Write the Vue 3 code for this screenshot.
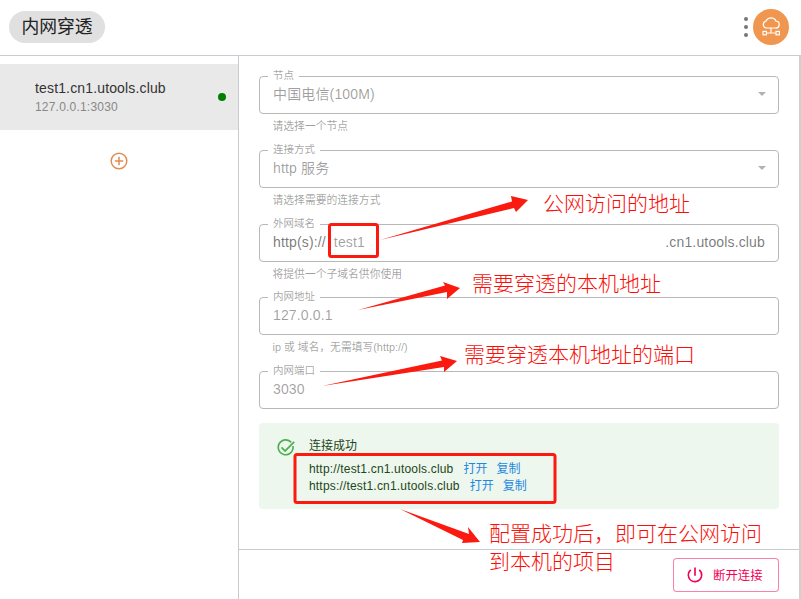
<script setup>
const fields = [
  { label: '节点', value: '中国电信(100M)', hint: '请选择一个节点', select: true },
  { label: '连接方式', value: 'http 服务', hint: '请选择需要的连接方式', select: true },
  { label: '外网域名', prefix: 'http(s)://', value: 'test1', suffix: '.cn1.utools.club', hint: '将提供一个子域名供你使用' },
  { label: '内网地址', value: '127.0.0.1', hint: 'ip 或 域名，无需填写(http://)' },
  { label: '内网端口', value: '3030', hint: '' },
]
const urls = ['http://test1.cn1.utools.club', 'https://test1.cn1.utools.club']
const arrows = [
  '380,240 512,201.5 511,196 528,200 516,212 514,208',
  '358,310 445,285.5 443,282 460,288 447,299 447,292',
  '322,386 442,360.5 440,356 457,361 444,372 444,367',
  '400,509 469,534 468,527 480,542 462,543 463,540',
]
const notes = [
  { cls: 'n1', text: '公网访问的地址' },
  { cls: 'n2', text: '需要穿透的本机地址' },
  { cls: 'n3', text: '需要穿透本机地址的端口' },
  { cls: 'n4', text: '配置成功后，即可在公网访问' },
  { cls: 'n5', text: '到本机的项目' },
]
</script>

<template>
  <div class="app">
    <header class="top">
      <span class="chip">内网穿透</span>
      <div class="top-right">
        <div class="dots"><i></i><i></i><i></i></div>
        <div class="avatar">
          <svg width="26" height="26" viewBox="0 0 26 26" fill="none" stroke="#fff" stroke-width="1.2">
            <path d="M8.500 14h9a3.400 3.400 0 0 0 .6-6.800A5.500 5.500 0 0 0 8 7.100a3.500 3.500 0 0 0 .5 6.900z" />
            <path d="M13 14v5M8.500 19h9" />
            <rect x="5" y="17.400" width="3.400" height="3.400" />
            <rect x="18" y="17.400" width="3.400" height="3.400" />
          </svg>
        </div>
      </div>
    </header>
    <div class="body">
      <aside class="side">
        <div class="item">
          <div class="item-text">
            <div class="host">test1.cn1.utools.club</div>
            <div class="addr">127.0.0.1:3030</div>
          </div>
          <span class="dot"></span>
        </div>
        <div class="add">
          <svg width="18" height="18" viewBox="0 0 18 18" fill="none" stroke="#e08d52" stroke-width="1.500">
            <circle cx="9" cy="9" r="7.800" />
            <path d="M9 4.800v8.400M4.800 9h8.400" />
          </svg>
        </div>
      </aside>
      <main class="main">
        <div class="form">
          <div v-for="f in fields" :key="f.label" class="row">
            <div class="field">
              <span class="label">{{ f.label }}</span>
              <span v-if="f.prefix" class="prefix">{{ f.prefix }}</span>
              <span class="value">{{ f.value }}</span>
              <span v-if="f.suffix" class="suffix">{{ f.suffix }}</span>
              <span v-if="f.select" class="caret"></span>
            </div>
            <div class="hint">{{ f.hint }}</div>
          </div>
          <div class="alert">
            <svg class="check" width="22" height="22" viewBox="0 0 24 24" fill="#4caf50">
              <path d="M20.500 9.800a9 9 0 1 1-2.200-4.600l-1.300 1.300a7.200 7.200 0 1 0 1.700 3.300z" />
              <path d="M7.800 10.700l3.200 3.200 9.300-9.300 1.300 1.300L11 16.500l-4.500-4.500z" />
            </svg>
            <div class="alert-body">
              <div class="alert-title">连接成功</div>
              <div v-for="u in urls" :key="u" class="url">
                <span>{{ u }}</span>
                <a>打开</a>
                <a>复制</a>
              </div>
            </div>
          </div>
        </div>
        <footer class="foot">
          <button class="stop">
            <svg width="20" height="20" viewBox="0 0 24 24" fill="#f50057">
              <path d="M13 3h-2v10h2V3zm4.830 2.170l-1.420 1.420A6.920 6.920 0 0 1 19 12c0 3.870-3.130 7-7 7A6.995 6.995 0 0 1 7.580 6.580L6.170 5.170A8.932 8.932 0 0 0 3 12a9 9 0 0 0 18 0c0-2.740-1.230-5.180-3.170-6.830z" />
            </svg>
            <span>断开连接</span>
          </button>
        </footer>
      </main>
    </div>

    <svg class="marks" width="801" height="599" viewBox="0 0 801 599">
      <rect x="329.500" y="224.500" width="48" height="32" rx="2" fill="none" stroke="#fb1a10" stroke-width="3" />
      <rect x="295" y="454.500" width="260" height="48" rx="2" fill="none" stroke="#fb1a10" stroke-width="3" />
      <polygon v-for="p in arrows" :key="p" :points="p" fill="#fb1a10" />
    </svg>
    <span v-for="n in notes" :key="n.cls" class="note" :class="n.cls">{{ n.text }}</span>
  </div>
</template>

<style>
html, body { margin: 0; background: #fff; }
</style>

<style scoped>
.app {
  position: relative;
  width: 801px;
  height: 599px;
  overflow: hidden;
  box-sizing: border-box;
  font-family: "Liberation Sans", "Noto Sans CJK SC", sans-serif;
  color: rgba(0, 0, 0, 0.87);
}
.top {
  height: 55px;
  border-bottom: 1px solid #c8ccd0;
  display: flex;
  align-items: center;
  justify-content: space-between;
  padding: 0 12px 0 9px;
}
.chip {
  height: 32px;
  line-height: 32px;
  margin-top: -1px;
  padding: 0 12.500px;
  border-radius: 16px;
  background: #e0e0e0;
  font-size: 17.800px;
  color: #222;
}
.top-right { display: flex; align-items: center; gap: 5.500px; margin-top: -1px; }
.dots { display: flex; flex-direction: column; gap: 4px; }
.dots i { width: 4px; height: 4px; border-radius: 50%; background: #777; display: block; }
.avatar {
  width: 36px;
  height: 36px;
  border-radius: 50%;
  background: #f0964f;
  display: flex;
  align-items: center;
  justify-content: center;
}
.body { display: flex; height: 543px; }
.side {
  width: 238px;
  flex: none;
  border-right: 1px solid #c8ccd0;
  padding-top: 8px;
}
.item {
  height: 66px;
  background: #e9e9e9;
  display: flex;
  align-items: center;
  justify-content: space-between;
  padding: 0 12px 0 35px;
}
.item-text { padding-top: 2px; }
.host { font-size: 14px; line-height: 18px; color: #333; letter-spacing: 0.15px; }
.addr { font-size: 12px; line-height: 20px; color: #888; letter-spacing: 0.2px; }
.dot { width: 8px; height: 8px; border-radius: 50%; background: #008000; }
.add { display: flex; justify-content: center; padding: 22px 1px 0 0; }
.add svg { display: block; }
.main {
  flex: 1;
  display: flex;
  flex-direction: column;
  border-right: 2px solid #d0d0d0;
  min-width: 0;
}
.form { flex: 1; padding: 20px 20px 0; }
.row { height: 73.750px; }
.field {
  position: relative;
  height: 38px;
  box-sizing: border-box;
  border: 1px solid #b8b8b8;
  border-radius: 4px;
  display: flex;
  align-items: center;
  padding: 0 13px 2px;
  font-size: 14px;
  line-height: 18px;
  letter-spacing: 0.15px;
  color: rgba(0, 0, 0, 0.38);
}
.label {
  position: absolute;
  left: 8px;
  top: -9px;
  padding: 0 5px;
  background: #fff;
  font-size: 10.500px;
  line-height: 14px;
  letter-spacing: 0;
  color: rgba(0, 0, 0, 0.38);
}
.prefix { color: rgba(0, 0, 0, 0.54); margin-right: 8px; }
.suffix { margin-left: auto; color: rgba(0, 0, 0, 0.54); }
.caret {
  position: absolute;
  right: 12px;
  top: 15px;
  border: 4px solid transparent;
  border-top-color: rgba(0, 0, 0, 0.3);
  border-bottom: 0;
}
.hint {
  margin: 5px 0 0 13.500px;
  font-size: 10.800px;
  line-height: 14px;
  color: rgba(0, 0, 0, 0.38);
}
.alert {
  height: 86px;
  margin-top: -22px;
  box-sizing: border-box;
  background: #edf7ed;
  border-radius: 4px;
  padding: 14px 16px;
  display: flex;
  gap: 12px;
  color: #1e4620;
  font-size: 12px;
}
.check { flex: none; }
.alert-title { line-height: 18px; margin-bottom: 6px; }
.url { line-height: 17px; display: flex; gap: 9px; }
.url span { margin-right: 1px; letter-spacing: 0.18px; }
.url a { color: #1e88e5; }
.foot {
  height: 50px;
  flex: none;
  box-sizing: border-box;
  border-top: 1px solid #c8ccd0;
  display: flex;
  justify-content: flex-end;
  align-items: flex-start;
  padding: 8px 20px 0 0;
}
.stop {
  width: 106px;
  height: 34px;
  box-sizing: border-box;
  border: 1px solid rgba(245, 0, 87, 0.5);
  border-radius: 4px;
  background: #fff;
  color: #f50057;
  font-family: inherit;
  font-size: 12.400px;
  display: flex;
  align-items: center;
  gap: 8px;
  padding: 0 0 0 11px;
}
.marks { position: absolute; left: 0; top: 0; pointer-events: none; }
.note {
  position: absolute;
  font-size: 21px;
  font-weight: 300;
  line-height: 28px;
  color: #fb0f0a;
  white-space: nowrap;
}
.n1 { left: 543px; top: 190px; }
.n2 { left: 472px; top: 270px; }
.n3 { left: 464px; top: 341px; }
.n4 { left: 489px; top: 520px; }
.n5 { left: 489px; top: 548px; }
</style>
